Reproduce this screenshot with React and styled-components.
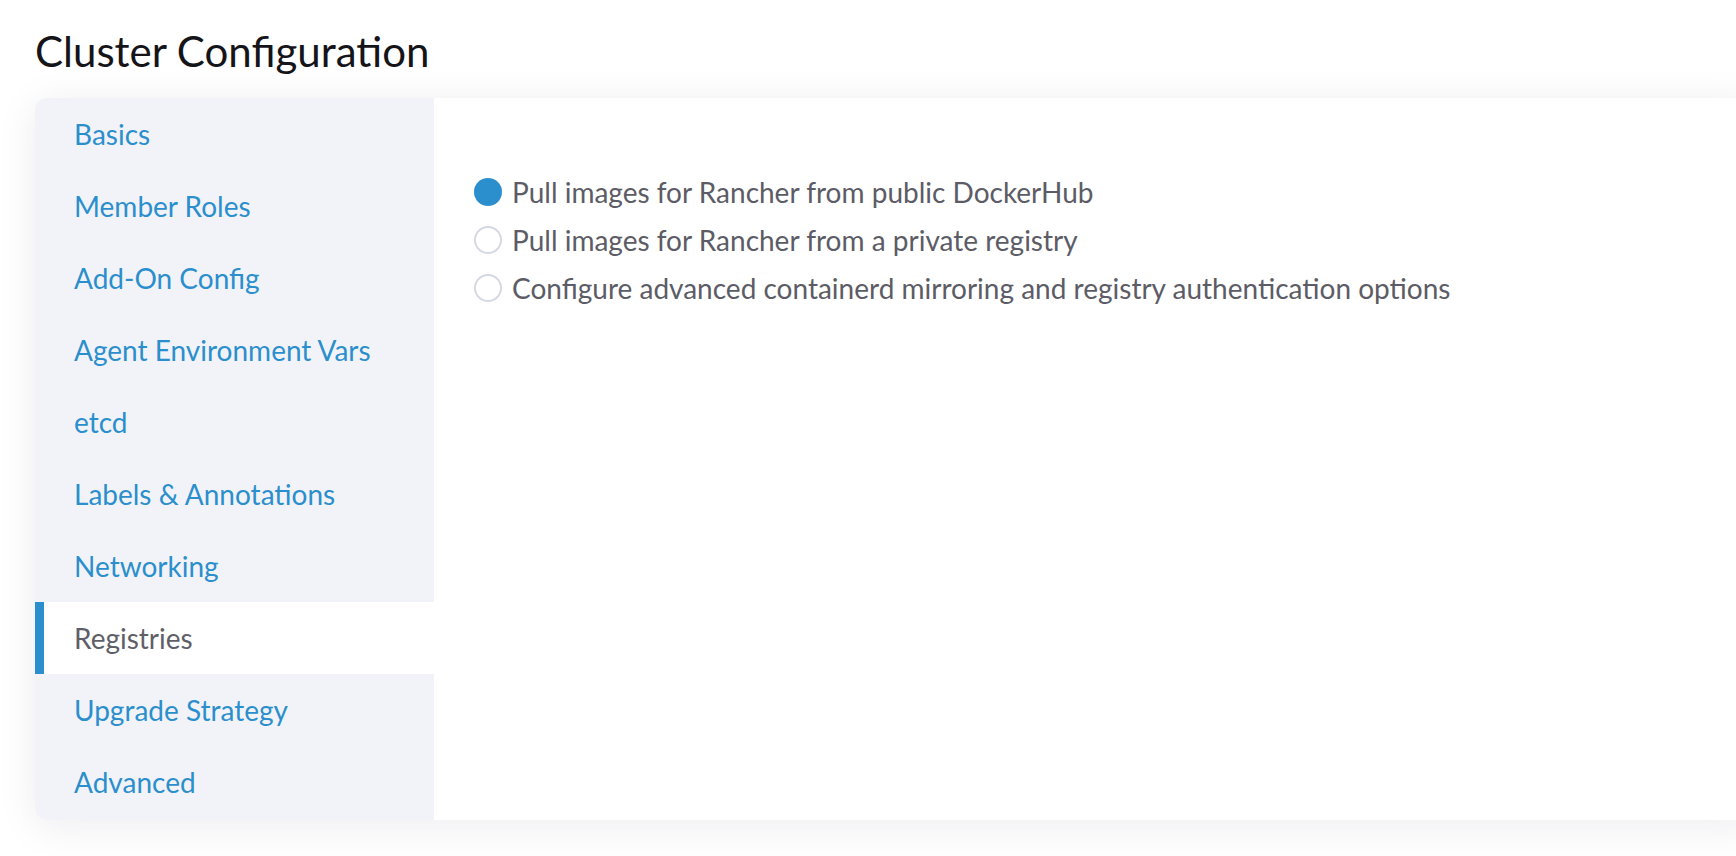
import React, { useState } from "react";
import styled, { createGlobalStyle } from "styled-components";

const sections = [
  "Basics",
  "Member Roles",
  "Add-On Config",
  "Agent Environment Vars",
  "etcd",
  "Labels & Annotations",
  "Networking",
  "Registries",
  "Upgrade Strategy",
  "Advanced",
];

const registryOptions = [
  { id: "public", label: "Pull images for Rancher from public DockerHub" },
  { id: "private", label: "Pull images for Rancher from a private registry" },
  {
    id: "advanced",
    label: "Configure advanced containerd mirroring and registry authentication options",
  },
];

function App() {
  const [active, setActive] = useState("Registries");
  const [source, setSource] = useState("public");

  return (
    <>
      <GlobalStyle />
      <Page>
        <Title>Cluster Configuration</Title>
        <Card>
          <SideNav>
            {sections.map((name) => (
              <NavItem
                key={name}
                $active={name === active}
                onClick={() => setActive(name)}
              >
                {name}
              </NavItem>
            ))}
          </SideNav>
          <Content>
            <RadioGroup>
              {registryOptions.map((opt) => (
                <RadioRow key={opt.id} onClick={() => setSource(opt.id)}>
                  <RadioDot $checked={source === opt.id} />
                  <RadioLabel>{opt.label}</RadioLabel>
                </RadioRow>
              ))}
            </RadioGroup>
          </Content>
        </Card>
      </Page>
    </>
  );
}

export default App;

const GlobalStyle = createGlobalStyle`
  html, body {
    margin: 0;
    padding: 0;
    background: #ffffff;
    font-family: Lato, "Open Sans", sans-serif;
  }
`;

const Page = styled.div`
  width: 1736px;
  height: 856px;
  overflow: hidden;
  padding: 26px 0 0 35px;
  box-sizing: border-box;
`;

const Title = styled.h1`
  margin: 0 0 22px 0;
  font-size: 42px;
  font-weight: 400;
  line-height: 50px;
  color: #141419;
`;

const Card = styled.div`
  display: flex;
  height: 722px;
  margin-right: -20px;
  border-radius: 12px 0 0 12px;
  background: #ffffff;
  box-shadow: 0 6px 40px rgba(20, 24, 60, 0.08);
  overflow: hidden;
`;

const SideNav = styled.nav`
  width: 399px;
  flex-shrink: 0;
  display: flex;
  flex-direction: column;
  background: #f2f3f8;
`;

const NavItem = styled.div`
  height: 72px;
  display: flex;
  align-items: center;
  padding-left: ${(p) => (p.$active ? "30px" : "39px")};
  border-left: ${(p) => (p.$active ? "9px solid #2b8fcd" : "none")};
  background: ${(p) => (p.$active ? "#ffffff" : "transparent")};
  color: ${(p) => (p.$active ? "#5f5f69" : "#2b8fcd")};
  font-size: 28px;
  cursor: pointer;
`;

const Content = styled.div`
  flex: 1;
  padding: 70px 40px 40px 40px;
`;

const RadioGroup = styled.div`
  display: flex;
  flex-direction: column;
`;

const RadioRow = styled.label`
  display: flex;
  align-items: center;
  height: 48px;
  gap: 10px;
  cursor: pointer;
`;

const RadioDot = styled.span`
  width: 28px;
  height: 28px;
  box-sizing: border-box;
  border-radius: 50%;
  flex-shrink: 0;
  background: ${(p) => (p.$checked ? "#2b8fcd" : "#ffffff")};
  border: ${(p) => (p.$checked ? "none" : "2px solid #d6d8e4")};
`;

const RadioLabel = styled.span`
  font-size: 28px;
  color: #5c5c66;
`;
